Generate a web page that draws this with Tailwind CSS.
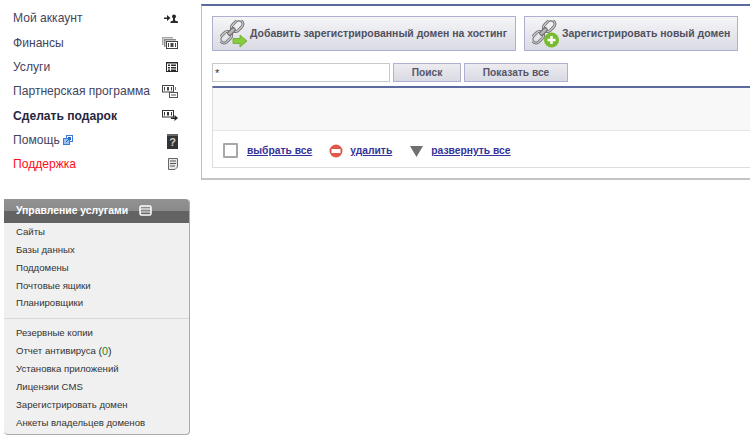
<!DOCTYPE html>
<html lang="ru">
<head>
  <meta charset="UTF-8" />
  <meta name="viewport" content="width=device-width, initial-scale=1" />
  <title>Управление услугами</title>
  <script src="https://cdn.jsdelivr.net/npm/@tailwindcss/browser@4"></script>
</head>
<body class="bg-white w-[750px] h-[443px] overflow-hidden flex font-['Liberation_Sans',Arial,sans-serif]">

  <!-- left column -->
  <div class="w-[201px] shrink-0 flex flex-col">
    <ul class="pt-[6.4px] text-[12.1px] text-[#44445c] w-[190px]">
      <li class="h-[24.3px] flex items-center justify-between pl-[13px] pr-[12px]">
        <span>Мой аккаунт</span>
        <svg width="14" height="9" viewBox="0 0 14 9" fill="#2a2a2a"><path d="M0 3.500h3V1l3.500 3L3 7V5H0z"/><circle cx="10" cy="2.500" r="2"/><path d="M9 4h2v2.500l3 1V9H6.500V7.500l2.500-1z"/></svg>
      </li>
      <li class="h-[24.3px] flex items-center justify-between pl-[13px] pr-[12px]">
        <span>Финансы</span>
        <svg width="16" height="12" viewBox="0 0 16 12"><path d="M0 0h11v1.500H1.500V8H0z" fill="#aaa"/><path d="M2 2h12v1.500H3.500V10H2z" fill="#888"/><rect x="4.500" y="4.500" width="11" height="7" fill="#fff" stroke="#444"/><rect x="8.500" y="6" width="3" height="4" fill="#444"/><rect x="6" y="6" width="1" height="4" fill="#444"/><rect x="13" y="6" width="1" height="4" fill="#444"/></svg>
      </li>
      <li class="h-[24.3px] flex items-center justify-between pl-[13px] pr-[12px]">
        <span>Услуги</span>
        <svg width="12" height="10" viewBox="0 0 12 10"><rect width="11" height="9" x=".5" y=".5" fill="#fff" stroke="#2a2a2a"/><rect width="12" height="1.500" fill="#2a2a2a"/><path d="M2 2.500h2V4H2zM5 2.500h5V4H5zM2 5h2v1.500H2zM5 5h5v1.500H5zM2 7.500h2V9H2zM5 7.500h5V9H5z" fill="#2a2a2a"/></svg>
      </li>
      <li class="h-[24.3px] flex items-center justify-between pl-[13px] pr-[12px]">
        <span>Партнерская программа</span>
        <svg width="16" height="13" viewBox="0 0 16 13"><rect x=".5" y=".5" width="11" height="6.500" fill="#fff" stroke="#444"/><path d="M2 2h1v3.500H2zM5 2h2v3.500H5zM9 2h1v3.500H9z" fill="#444"/><rect x="7.500" y="7.500" width="8" height="5" fill="#fff" stroke="#555"/><path d="M9 10h5" stroke="#555"/><path d="M13 2h1v3h-1z" fill="#777"/></svg>
      </li>
      <li class="h-[24.3px] flex items-center justify-between pl-[13px] pr-[12px] font-bold text-[#26263e]">
        <span>Сделать подарок</span>
        <svg width="16" height="11" viewBox="0 0 16 11"><rect x=".5" y=".5" width="11" height="6.500" fill="#fff" stroke="#333"/><path d="M2 2h1v3.500H2zM5 2h2v3.500H5zM9 2h1v3.500H9z" fill="#333"/><path d="M9 7.500h3.500V5L16 8l-3.500 3V9H9z" fill="#222"/></svg>
      </li>
      <li class="h-[24.3px] flex items-center justify-between pl-[13px] pr-[12px]">
        <span class="flex items-center gap-[3px]">Помощь
          <svg width="10" height="10" viewBox="0 0 10 10"><rect x="3.500" y=".5" width="6" height="6" fill="#fff" stroke="#3b7bd8"/><rect x=".5" y="3.500" width="6" height="6" fill="#9cc0f0" stroke="#3b7bd8"/><path d="M3 7l4-4M5 2.500h2.500V5" stroke="#1f5fc0" fill="none"/></svg>
        </span>
        <svg width="11" height="15" viewBox="0 0 11 15" class="mt-[3px]"><rect width="11" height="15" fill="#333"/><rect width="11" height="2" fill="#666"/><text x="5.500" y="12" text-anchor="middle" font-size="11" font-weight="700" font-family="Liberation Sans" fill="#ccc">?</text></svg>
      </li>
      <li class="h-[24.3px] flex items-center justify-between pl-[13px] pr-[12px] text-[#ff0d18]">
        <span>Поддержка</span>
        <svg width="10" height="12" viewBox="0 0 10 12"><path d="M.5.500h9v8.500l-2.500 2.500h-6.500z" fill="#e8e8e8" stroke="#666"/><path d="M2 3h6M2 5.500h6M2 8h5" stroke="#555"/></svg>
      </li>
    </ul>

    <div class="mt-[22.5px] ml-[4px] w-[186px] h-[236px] bg-[#f0f0f0] rounded-b-[4px] rounded-tr-[4px] border-r border-b border-[#aaa] text-[9.6px] text-[#333]">
      <div class="h-[24px] rounded-tr-[4px] bg-[linear-gradient(#929292_0,#8a8a8a_50%,#636363_50%,#636363_100%)] flex items-center pl-[12px] text-white font-bold text-[10.4px]">
        Управление услугами
        <svg width="13" height="11" viewBox="0 0 13 11" class="ml-[11px]"><rect x="1" y="1" width="11" height="9" rx="1.500" fill="none" stroke="#fff" stroke-width="1.500"/><path d="M1 4h11M1 7h11" stroke="#fff"/></svg>
      </div>
      <ul class="pl-[12px] pt-[.5px] pb-[5.5px] border-b border-[#d9d9d9]">
        <li class="h-[17.800px] flex items-center">Сайты</li>
        <li class="h-[17.800px] flex items-center">Базы данных</li>
        <li class="h-[17.800px] flex items-center">Поддомены</li>
        <li class="h-[17.800px] flex items-center">Почтовые ящики</li>
        <li class="h-[17.800px] flex items-center">Планировщики</li>
      </ul>
      <ul class="pl-[12px] pt-[5px]">
        <li class="h-[18px] flex items-center">Резервные копии</li>
        <li class="h-[18px] flex items-center">Отчет антивируса&nbsp;<span class="text-[10.7px]">(<span class="text-[#1a8a1a]">0</span>)</span></li>
        <li class="h-[18px] flex items-center">Установка приложений</li>
        <li class="h-[18px] flex items-center">Лицензии CMS</li>
        <li class="h-[18px] flex items-center">Зарегистрировать домен</li>
        <li class="h-[18px] flex items-center">Анкеты владельцев доменов</li>
      </ul>
    </div>
  </div>

  <!-- main panel -->
  <div class="mt-[4px] w-[549px] h-[176px] border-t-2 border-t-[#5b6ba0] border-l border-l-[#bbb] border-b-2 border-b-[#c4c4c4] pl-[10px] overflow-hidden">
    <div class="flex gap-[8px] pt-[10px]">
      <button class="h-[35px] w-[304px] shrink-0 flex items-center border border-[#aeb0cf] bg-[linear-gradient(#f6f6f8,#d9dae3)] pl-[7px] text-[10.45px] font-bold text-[#50505f] whitespace-nowrap">
        <svg width="28" height="28" viewBox="0 0 28 28" class="shrink-0 mr-[2px]">
          <g transform="rotate(-45 11.500 11.500)" fill="none">
            <rect x="-3" y="7.500" width="13" height="8" rx="4" stroke="#777" stroke-width="3"/>
            <rect x="-3" y="7.500" width="13" height="8" rx="4" stroke="#ddd" stroke-width="1"/>
            <rect x="13" y="7.500" width="13" height="8" rx="4" stroke="#777" stroke-width="3"/>
            <rect x="13" y="7.500" width="13" height="8" rx="4" stroke="#ddd" stroke-width="1"/>
            <rect x="7" y="9.500" width="9" height="4" rx="2" fill="#b5b5b5" stroke="#666"/>
          </g>
          <path d="M13 18.500h7V15l7 6-7 6v-3.500h-7z" fill="#86cc3e" stroke="#6aa82c" stroke-width=".8"/>
        </svg>
        Добавить зарегистрированный домен на хостинг
      </button>
      <button class="h-[35px] w-[214px] shrink-0 flex items-center border border-[#aeb0cf] bg-[linear-gradient(#f6f6f8,#d9dae3)] pl-[7px] text-[10.45px] font-bold text-[#50505f] whitespace-nowrap">
        <svg width="28" height="28" viewBox="0 0 28 28" class="shrink-0 mr-[2px]">
          <g transform="rotate(-45 11.500 11.500)" fill="none">
            <rect x="-3" y="7.500" width="13" height="8" rx="4" stroke="#777" stroke-width="3"/>
            <rect x="-3" y="7.500" width="13" height="8" rx="4" stroke="#ddd" stroke-width="1"/>
            <rect x="13" y="7.500" width="13" height="8" rx="4" stroke="#777" stroke-width="3"/>
            <rect x="13" y="7.500" width="13" height="8" rx="4" stroke="#ddd" stroke-width="1"/>
            <rect x="7" y="9.500" width="9" height="4" rx="2" fill="#b5b5b5" stroke="#666"/>
          </g>
          <circle cx="19.500" cy="20" r="7.500" fill="#78bb2e"/>
          <path d="M15.500 20h8M19.500 16v8" stroke="#fff" stroke-width="2.500"/>
        </svg>
        Зарегистрировать новый домен
      </button>
    </div>

    <div class="flex items-center mt-[12px] h-[19px]">
      <input type="text" value="*" class="w-[178px] h-[19px] border border-[#c9c9c9] px-[2px] text-[11px] text-[#333] outline-none" />
      <button class="ml-[3px] w-[68px] h-[19px] border border-[#aeb0cf] bg-[linear-gradient(#ececf0,#d9dae3)] text-[10.2px] font-bold text-[#55556a]">Поиск</button>
      <button class="ml-[3px] w-[104px] h-[19px] border border-[#aeb0cf] bg-[linear-gradient(#ececf0,#d9dae3)] text-[10.2px] font-bold text-[#55556a]">Показать все</button>
    </div>

    <div class="mt-[4px] border-t-2 border-t-[#5b6ba0] border-l border-l-[#ddd] border-b border-b-[#ddd] h-[82px]">
      <div class="h-[43px] bg-[#f8f8f8] border-b border-[#e6e6e6]"></div>
      <div class="h-[37px] pt-[2px] flex items-center pl-[10px] text-[10.3px] font-bold text-[#33339a]">
        <span class="w-[15px] h-[15px] border-2 border-[#a8a8a8] bg-white rounded-[1px]"></span>
        <a href="#" class="ml-[9px] underline">выбрать все</a>
        <svg width="14" height="14" viewBox="0 0 14 14" class="ml-[17px]"><circle cx="7" cy="7" r="6.500" fill="#e2574c"/><rect x="2.500" y="5" width="9" height="4" fill="#fff"/></svg>
        <a href="#" class="ml-[7px] underline">удалить</a>
        <svg width="13" height="11" viewBox="0 0 13 11" class="ml-[18px] mt-[2px]"><path d="M0 0h13L6.500 11z" fill="#707070"/></svg>
        <a href="#" class="ml-[8px] underline">развернуть все</a>
      </div>
    </div>
  </div>
</body>
</html>
